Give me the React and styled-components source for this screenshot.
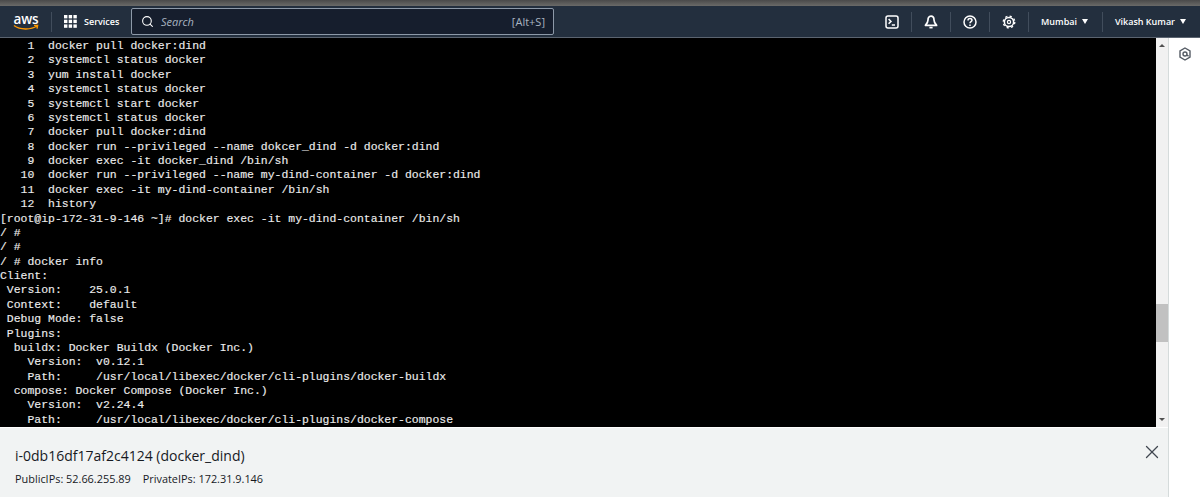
import React from "react";
import styled, { createGlobalStyle } from "styled-components";
import { Search, X } from "lucide-react";

const GlobalStyle = createGlobalStyle`
  html, body {
    margin: 0;
    padding: 0;
    height: 100%;
    overflow: hidden;
    background: #ffffff;
  }
  #root {
    height: 100%;
  }
`;

const Page = styled.div`
  display: flex;
  flex-direction: column;
  width: 1200px;
  height: 497px;
  font-family: "Open Sans", "Liberation Sans", sans-serif;
`;

const TopStrip = styled.div`
  height: 6px;
  flex: none;
  background: linear-gradient(#4a4a4a, #6a6a68);
`;

const Header = styled.header`
  height: 32px;
  flex: none;
  display: flex;
  align-items: center;
  background: #232f3e;
  color: #ffffff;
  border-bottom: 1px solid #5b6470;
  box-sizing: border-box;
`;

const Logo = styled.div`
  width: 51px;
  flex: none;
  display: flex;
  flex-direction: column;
  align-items: center;
  padding-left: 1px;
  box-sizing: border-box;
  margin-top: 2px;
`;

const LogoText = styled.span`
  font-family: "Open Sans", "Liberation Sans", sans-serif;
  font-size: 13.5px;
  font-weight: 600;
  line-height: 10px;
  letter-spacing: -0.2px;
`;

const Divider = styled.span`
  width: 1px;
  height: 20px;
  flex: none;
  background: #414d5c;
`;

const ServicesButton = styled.div`
  width: 79px;
  flex: none;
  display: flex;
  align-items: center;
  gap: 7px;
  padding-left: 12px;
  box-sizing: border-box;
  font-size: 9px;
  font-weight: 600;
`;

const SearchBox = styled.div`
  width: 423px;
  height: 27px;
  flex: none;
  display: flex;
  align-items: center;
  gap: 7px;
  padding: 0 8px 0 9px;
  box-sizing: border-box;
  background: #161e2d;
  border: 1px solid #8d99a8;
  border-radius: 2px;
  color: #a9b4c0;
  font-size: 11px;
`;

const SearchLabel = styled.span`
  flex: 1;
  font-style: italic;
`;

const IconGroup = styled.div`
  margin-left: auto;
  display: flex;
  align-items: center;
`;

const IconButton = styled.div`
  width: 38px;
  display: flex;
  justify-content: center;
  align-items: center;
`;

const Menu = styled.div`
  width: ${(p) => p.$width}px;
  display: flex;
  justify-content: flex-end;
  align-items: center;
  gap: 5px;
  padding-right: 14px;
  box-sizing: border-box;
  font-size: 9px;
  font-weight: 600;
`;

const Caret = styled.span`
  width: 0;
  height: 0;
  border-left: 3.5px solid transparent;
  border-right: 3.5px solid transparent;
  border-top: 5px solid #ffffff;
`;

const Body = styled.div`
  flex: 1;
  min-height: 0;
  display: flex;
`;

const Workspace = styled.div`
  flex: 1;
  min-width: 0;
  display: flex;
  flex-direction: column;
`;

const TerminalArea = styled.div`
  flex: 1;
  min-height: 0;
  display: flex;
`;

const Terminal = styled.pre`
  flex: 1;
  min-width: 0;
  margin: 0;
  padding: 1px 0 0;
  overflow: hidden;
  background: #000000;
  color: #ececec;
  font-family: "Liberation Mono", "DejaVu Sans Mono", monospace;
  font-size: 11.44px;
  line-height: 14.37px;
  -webkit-text-stroke: 0.15px #ececec;
`;

const ScrollTrack = styled.div`
  width: 12px;
  flex: none;
  display: flex;
  flex-direction: column;
  align-items: center;
  background: #f1f1f1;
`;

const ScrollArrow = styled.span`
  width: 0;
  height: 0;
  flex: none;
  margin: 6px 0;
  border-left: 3.5px solid transparent;
  border-right: 3.5px solid transparent;
  ${(p) => (p.$down ? "border-top: 3px solid #505050;" : "border-bottom: 3px solid #505050;")}
`;

const ScrollThumb = styled.div`
  width: 100%;
  height: 38px;
  flex: none;
  margin-top: 251px;
  margin-bottom: auto;
  background: #c1c1c1;
`;

const DetailsPanel = styled.section`
  height: 70px;
  flex: none;
  display: flex;
  justify-content: space-between;
  padding: 18px 5px 0 15px;
  box-sizing: border-box;
  background: #f1f3f3;
  border-top: 1px solid #ffffff;
  color: #16191f;
`;

const InstanceTitle = styled.div`
  font-size: 14px;
  line-height: 19px;
`;

const IpRow = styled.div`
  display: flex;
  gap: 12px;
  margin-top: 7px;
  font-size: 10.9px;
  line-height: 14px;
`;

const CloseButton = styled.div`
  color: #414750;
  margin-top: -5px;
`;

const SideRail = styled.aside`
  width: 32px;
  flex: none;
  display: flex;
  justify-content: center;
  padding-top: 9px;
  box-sizing: border-box;
  background: #ffffff;
  border-left: 1px solid #d5dbdb;
  color: #545b64;
`;

const lines = `    1  docker pull docker:dind
    2  systemctl status docker
    3  yum install docker
    4  systemctl status docker
    5  systemctl start docker
    6  systemctl status docker
    7  docker pull docker:dind
    8  docker run --privileged --name dokcer_dind -d docker:dind
    9  docker exec -it docker_dind /bin/sh
   10  docker run --privileged --name my-dind-container -d docker:dind
   11  docker exec -it my-dind-container /bin/sh
   12  history
[root@ip-172-31-9-146 ~]# docker exec -it my-dind-container /bin/sh
/ #
/ #
/ # docker info
Client:
 Version:    25.0.1
 Context:    default
 Debug Mode: false
 Plugins:
  buildx: Docker Buildx (Docker Inc.)
    Version:  v0.12.1
    Path:     /usr/local/libexec/docker/cli-plugins/docker-buildx
  compose: Docker Compose (Docker Inc.)
    Version:  v2.24.4
    Path:     /usr/local/libexec/docker/cli-plugins/docker-compose`;

const GridIcon = () => (
  <svg width="13" height="13" viewBox="0 0 13 13" fill="#ffffff">
    {[0, 4.7, 9.4].flatMap((y) =>
      [0, 4.7, 9.4].map((x) => <rect key={`${x}-${y}`} x={x} y={y} width="3.4" height="3.4" />)
    )}
  </svg>
);

const TerminalIcon = () => (
  <svg width="14" height="14" viewBox="0 0 14 14" fill="none" stroke="#ffffff" strokeWidth="1.5">
    <rect x="1" y="1" width="12" height="12" rx="2" />
    <path d="M3.6 4 L6 6.4 L3.6 8.8 M6.8 10 H10" />
  </svg>
);

const BellIcon = () => (
  <svg width="14" height="14" viewBox="0 0 14 14" fill="none" stroke="#ffffff" strokeWidth="1.7">
    <path d="M7 1.2 C4.6 1.2 4 3 4 5 C4 7.4 3 8.6 1.4 10.4 H12.6 C11 8.6 10 7.4 10 5 C10 3 9.4 1.2 7 1.2 Z" strokeLinejoin="round" />
    <path d="M5.4 12.6 H8.6" />
  </svg>
);

const HelpIcon = () => (
  <svg width="14" height="14" viewBox="0 0 14 14" fill="none" stroke="#ffffff" strokeWidth="1.5">
    <circle cx="7" cy="7" r="6" />
    <path d="M5 5.4 C5 4 6 3.5 7 3.5 C8.2 3.5 9 4.3 9 5.3 C9 6.7 7 6.7 7 8.3" />
    <path d="M7 9.5 V10.9" />
  </svg>
);

const GearIcon = () => (
  <svg width="14" height="14" viewBox="0 0 14 14" fill="none" stroke="#ffffff">
    <circle cx="7" cy="7" r="4.6" strokeWidth="1.5" />
    <circle cx="7" cy="7" r="1.6" strokeWidth="1.2" />
    <circle cx="7" cy="7" r="5.8" strokeWidth="1.3" strokeDasharray="2.2 2.35" />
  </svg>
);

const HexIcon = () => (
  <svg width="12" height="14" viewBox="0 0 12 14" fill="none" stroke="currentColor" strokeWidth="1.4">
    <path d="M6 1 L11 3.8 V10.2 L6 13 L1 10.2 V3.8 Z" />
    <circle cx="6" cy="7" r="2" />
    <path d="M7.7 8 L9.6 9.2" />
  </svg>
);

const App = () => (
  <>
    <GlobalStyle />
    <Page>
      <TopStrip />
      <Header>
        <Logo>
          <LogoText>aws</LogoText>
          <svg width="26" height="7" viewBox="0 0 26 7" fill="none" stroke="#ff9900" strokeWidth="1.4">
            <path d="M1 1.5 C7 6, 18 6, 24 2 M21 1.4 L24.6 1.4 L24 4.6" />
          </svg>
        </Logo>
        <Divider />
        <ServicesButton>
          <GridIcon />
          Services
        </ServicesButton>
        <SearchBox>
          <Search size={13} strokeWidth={2} color="#ffffff" />
          <SearchLabel>Search</SearchLabel>
          <span>[Alt+S]</span>
        </SearchBox>
        <IconGroup>
          <IconButton><TerminalIcon /></IconButton>
          <Divider />
          <IconButton><BellIcon /></IconButton>
          <Divider />
          <IconButton><HelpIcon /></IconButton>
          <Divider />
          <IconButton><GearIcon /></IconButton>
          <Divider />
          <Menu $width={73}>Mumbai <Caret /></Menu>
          <Divider />
          <Menu $width={97}>Vikash Kumar <Caret /></Menu>
        </IconGroup>
      </Header>
      <Body>
        <Workspace>
          <TerminalArea>
            <Terminal>{lines}</Terminal>
            <ScrollTrack>
              <ScrollArrow />
              <ScrollThumb />
              <ScrollArrow $down />
            </ScrollTrack>
          </TerminalArea>
          <DetailsPanel>
            <div>
              <InstanceTitle>i-0db16df17af2c4124 (docker_dind)</InstanceTitle>
              <IpRow>
                <span>PublicIPs: 52.66.255.89</span>
                <span>PrivateIPs: 172.31.9.146</span>
              </IpRow>
            </div>
            <CloseButton><X size={22} strokeWidth={1.4} /></CloseButton>
          </DetailsPanel>
        </Workspace>
        <SideRail><HexIcon /></SideRail>
      </Body>
    </Page>
  </>
);

export default App;
